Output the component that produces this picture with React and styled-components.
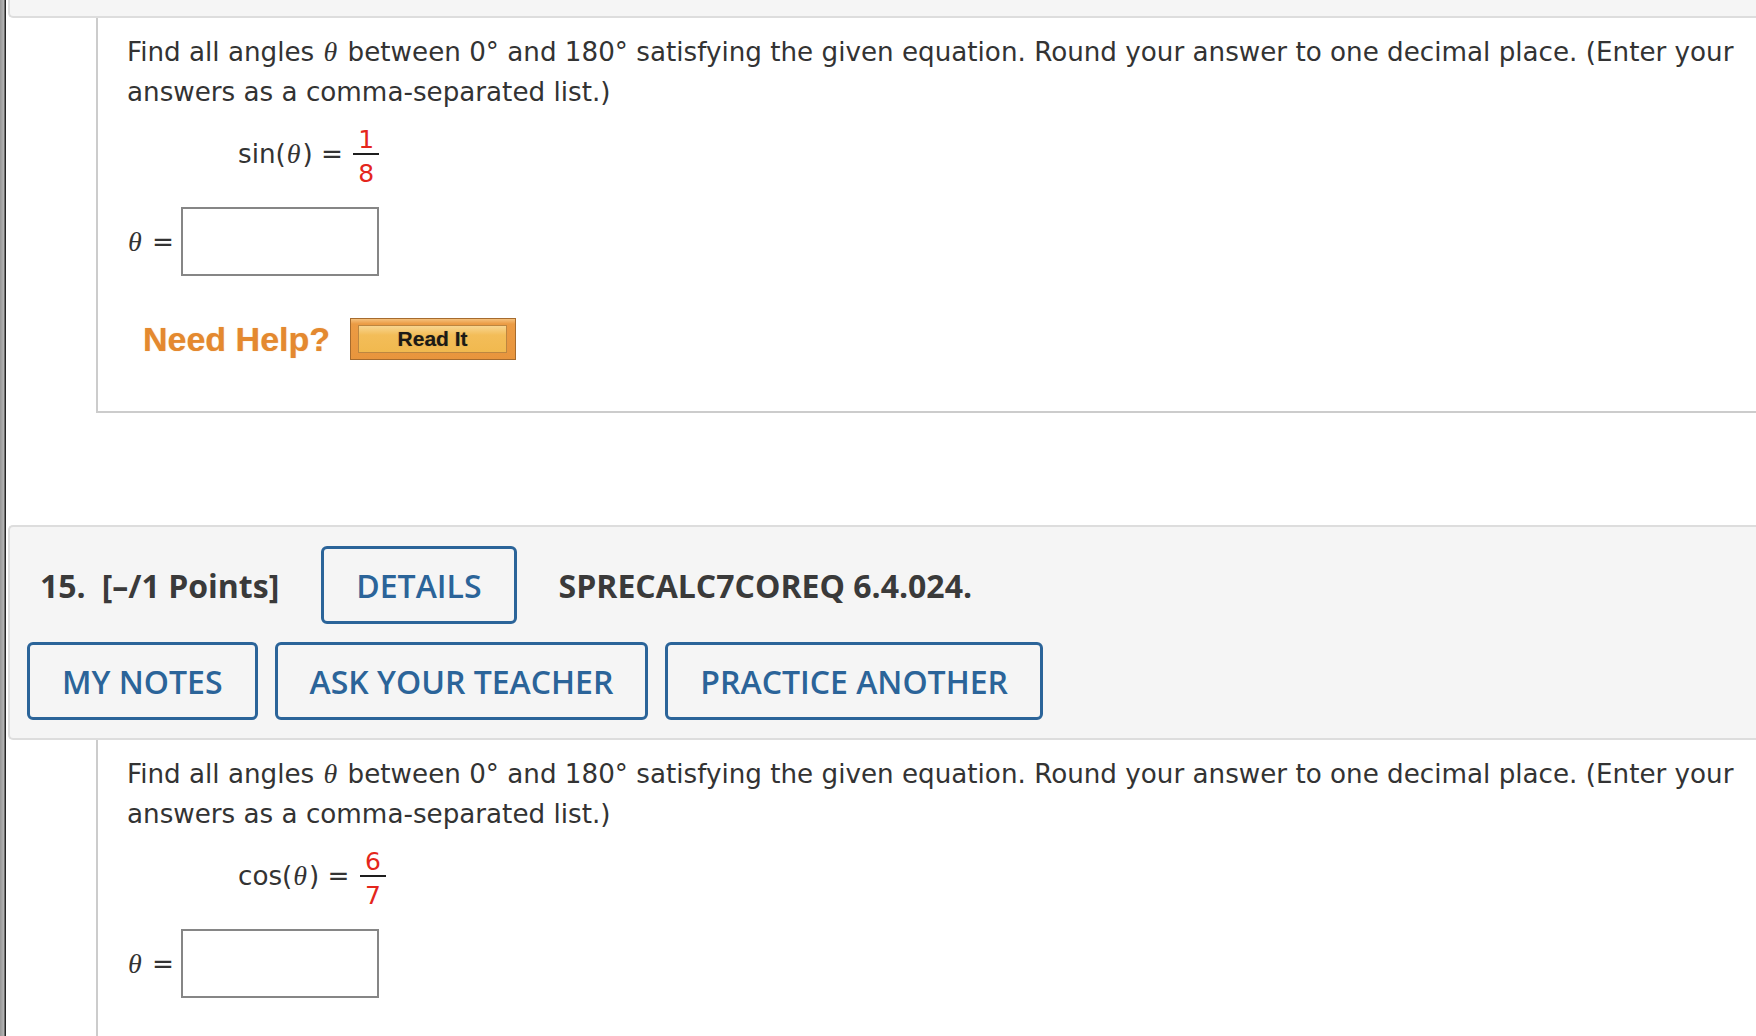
import React from 'react';
import styled, { createGlobalStyle } from 'styled-components';

const GlobalStyle = createGlobalStyle`
  html, body {
    margin: 0;
    padding: 0;
    background: #fff;
  }
  body {
    overflow: hidden;
    font-family: "DejaVu Sans", Verdana, sans-serif;
    color: #333;
  }
`;

const Page = styled.div`
  display: flex;
  width: 100vw;
  height: 100vh;
  overflow: hidden;
`;

const LeftRail = styled.div`
  flex: 0 0 6px;
  background: linear-gradient(to right, #969696 0, #b6b6b6 4px, #262626 5px, #262626 6px);
`;

const Column = styled.div`
  flex: 0 0 1800px;
  margin-left: 2px;
  display: flex;
  flex-direction: column;
`;

const PanelTail = styled.div`
  height: 16px;
  background: #f5f5f5;
  border-left: 2px solid #dddddd;
  border-bottom: 2px solid #dddddd;
  border-bottom-left-radius: 5px;
`;

const QuestionBody = styled.div`
  margin-left: 88px;
  border-left: 2px solid #cccccc;
  padding: 14px 0 ${(p) => (p.$closed ? '51px' : '0')} 29px;
  border-bottom: ${(p) => (p.$closed ? '2px solid #cccccc' : 'none')};
  flex: ${(p) => (p.$closed ? '0 0 auto' : '1 1 auto')};
`;

const Prompt = styled.p`
  margin: 0;
  font-size: 26.2px;
  line-height: 40px;
  padding-right: 40px;
`;

const Var = styled.i`
  display: inline-block;
  padding: 0 2px 0 1px;
  font-family: "Liberation Serif", "DejaVu Serif", serif;
  font-style: italic;
  font-size: 28px;
  line-height: 1;
`;

const Equation = styled.div`
  display: flex;
  align-items: center;
  margin: 9px 0 0 111px;
  font-size: 26.2px;
  line-height: 40px;
  white-space: pre;
`;

const Fraction = styled.span`
  display: inline-flex;
  flex-direction: column;
  align-items: stretch;
  margin-left: 2px;
  color: #e4261c;
  font-size: 25px;
  line-height: 26px;
  text-align: center;
`;

const Numerator = styled.span`
  padding: 6px 5px 0;
`;

const Denominator = styled.span`
  padding: 6px 5px 0;
  border-top: 2px solid #1e1e1e;
`;

const AnswerRow = styled.div`
  display: flex;
  align-items: center;
  margin-top: 20px;
  font-size: 26.2px;
  line-height: 40px;
  white-space: pre;
`;

const AnswerInput = styled.input`
  box-sizing: border-box;
  width: 198px;
  height: 69px;
  margin-left: 7px;
  border: 2px solid #868686;
  background: #fff;
  outline: none;
`;

const HelpRow = styled.div`
  display: flex;
  align-items: center;
  gap: 20px;
  margin: 42px 0 0 16px;
`;

const NeedHelp = styled.span`
  font-family: "Liberation Sans", Arial, sans-serif;
  font-weight: 700;
  font-size: 34px;
  line-height: 1;
  color: #e4892f;
  text-shadow: 0 0 1px rgba(228, 137, 47, 0.6);
`;

const ReadItButton = styled.button`
  box-sizing: border-box;
  display: flex;
  width: 166px;
  height: 42px;
  padding: 6px 8px 6px 7px;
  border: 1px solid #a66b2e;
  background: linear-gradient(#f5c17c 0, #eb9b44 5px, #e8953d 100%);
  cursor: pointer;
`;

const ReadItFace = styled.span`
  flex: 1;
  display: flex;
  align-items: center;
  justify-content: center;
  border: 1px solid #bd8640;
  background: linear-gradient(#f8d590 0, #f3bd58 35%, #f1b94f 100%);
  font-family: "Liberation Sans", Arial, sans-serif;
  font-weight: 700;
  font-size: 21px;
  color: #1c1a16;
  text-shadow: 0 0 1px rgba(0, 0, 0, 0.35);
`;

const Panel = styled.div`
  margin-top: 112px;
  display: flex;
  flex-direction: column;
  gap: 18px;
  padding: 19px 0 18px 17px;
  background: #f5f5f5;
  border: 2px solid #dddddd;
  border-right: none;
  border-radius: 5px 0 0 5px;
  font-family: "Open Sans", "Liberation Sans", sans-serif;
`;

const HeaderRow = styled.div`
  display: flex;
  align-items: center;
  gap: ${(p) => p.$gap}px;
  padding-left: ${(p) => p.$indent || 0}px;
`;

const Title = styled.span`
  font-weight: 700;
  font-size: 32px;
  color: #3a3a3a;
  white-space: pre;
`;

const Num = styled.span`
  margin-right: 16px;
`;

const ActionButton = styled.button`
  box-sizing: border-box;
  height: 78px;
  padding: 0 32px;
  border: 3px solid #2b6499;
  border-radius: 6px;
  background: transparent;
  color: #2b6499;
  font-family: "Open Sans", "Liberation Sans", sans-serif;
  font-weight: 600;
  font-size: 32px;
  white-space: nowrap;
  cursor: pointer;
`;

function Question({ fn, num, den, closed }) {
  return (
    <QuestionBody $closed={closed}>
      <Prompt>
        Find all angles <Var>θ</Var> between 0° and 180° satisfying the given equation. Round your answer to
        one decimal place. (Enter your answers as a comma-separated list.)
      </Prompt>
      <Equation>
        {fn}(<Var>θ</Var>){' = '}
        <Fraction>
          <Numerator>{num}</Numerator>
          <Denominator>{den}</Denominator>
        </Fraction>
      </Equation>
      <AnswerRow>
        <Var>θ</Var>{' ='}
        <AnswerInput type="text" />
      </AnswerRow>
      {closed && (
        <HelpRow>
          <NeedHelp>Need Help?</NeedHelp>
          <ReadItButton>
            <ReadItFace>Read It</ReadItFace>
          </ReadItButton>
        </HelpRow>
      )}
    </QuestionBody>
  );
}

export default function App() {
  return (
    <>
      <GlobalStyle />
      <Page>
        <LeftRail />
        <Column>
          <PanelTail />
          <Question fn="sin" num="1" den="8" closed />
          <Panel>
            <HeaderRow $gap={42} $indent={13}>
              <Title>
                <Num>15.</Num>[–/1 Points]
              </Title>
              <ActionButton>DETAILS</ActionButton>
              <Title>SPRECALC7COREQ 6.4.024.</Title>
            </HeaderRow>
            <HeaderRow $gap={17}>
              <ActionButton>MY NOTES</ActionButton>
              <ActionButton>ASK YOUR TEACHER</ActionButton>
              <ActionButton>PRACTICE ANOTHER</ActionButton>
            </HeaderRow>
          </Panel>
          <Question fn="cos" num="6" den="7" />
        </Column>
      </Page>
    </>
  );
}
